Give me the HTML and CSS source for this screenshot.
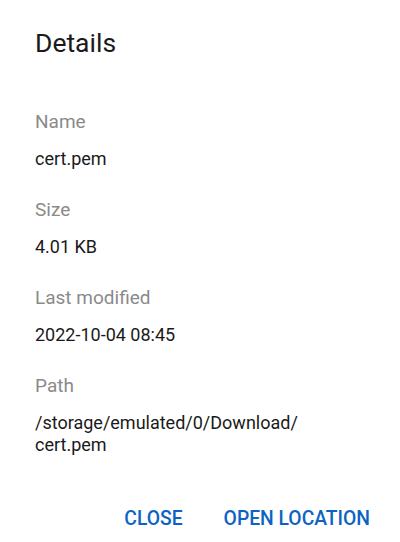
FILE: index.html
```html
<!DOCTYPE html>
<html>
<head>
<meta charset="utf-8">
<link rel="stylesheet" href="styles.css">
</head>
<body>
<div class="dialog">
  <h1 class="title">Details</h1>
  <div class="fields">
    <div class="field">
      <div class="label">Name</div>
      <div class="value">cert.pem</div>
    </div>
    <div class="field">
      <div class="label">Size</div>
      <div class="value">4.01 KB</div>
    </div>
    <div class="field">
      <div class="label">Last modified</div>
      <div class="value">2022-10-04 08:45</div>
    </div>
    <div class="field">
      <div class="label">Path</div>
      <div class="value">/storage/emulated/0/Download/<br>cert.pem</div>
    </div>
  </div>
  <div class="actions">
    <button class="btn">CLOSE</button>
    <button class="btn">OPEN LOCATION</button>
  </div>
</div>
</body>
</html>
```
FILE: styles.css
```css
html, body {
  margin: 0;
  padding: 0;
  background: #ffffff;
}
body {
  font-family: Roboto, "Noto Sans", sans-serif;
  color: #1c1c1c;
}
.dialog {
  width: 400px;
  height: 542px;
  box-sizing: border-box;
  padding: 28px 30px 0 35px;
}
.title {
  margin: 0;
  font-size: 26.5px;
  font-weight: 400;
  line-height: 30px;
  color: #1a1a1a;
}
.fields {
  display: flex;
  flex-direction: column;
  gap: 28px;
  margin-top: 52px;
}
.field {
  display: flex;
  flex-direction: column;
  gap: 14px;
}
.label {
  font-size: 19px;
  line-height: 24px;
  color: #8a8a8a;
}
.value {
  font-size: 18px;
  line-height: 22px;
  color: #1a1a1a;
}
.actions {
  display: flex;
  justify-content: flex-end;
  gap: 41px;
  margin-top: 51px;
}
.btn {
  background: none;
  border: none;
  padding: 0;
  font-family: Roboto, "Noto Sans", sans-serif;
  font-size: 19.3px;
  font-weight: 500;
  line-height: 24px;
  color: #0d63c4;
}
```
